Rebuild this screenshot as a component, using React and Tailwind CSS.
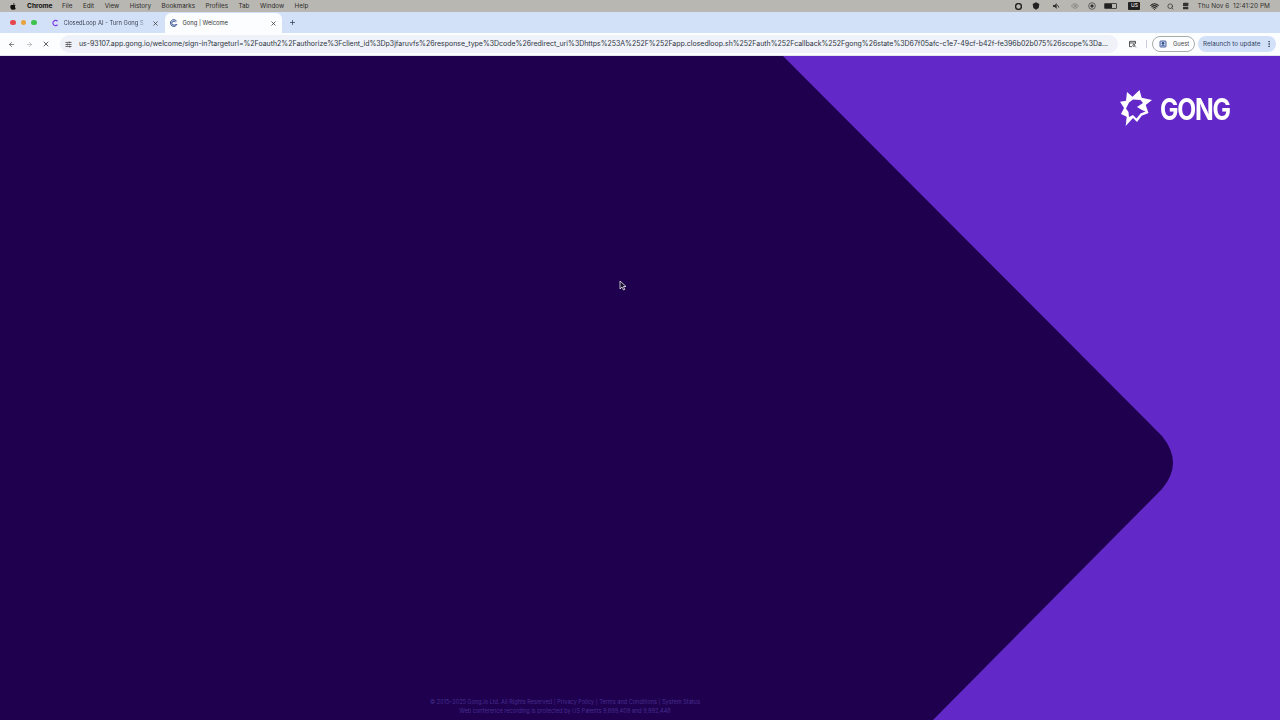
import React from "react";
import { X, Plus, ArrowLeft, ArrowRight, SlidersHorizontal, EllipsisVertical, Wifi, Search, Circle, Eye } from "lucide-react";

const menus = ["File", "Edit", "View", "History", "Bookmarks", "Profiles", "Tab", "Window", "Help"];

const longUrl = "us-93107.app.gong.io/welcome/sign-in?targeturl=%2Foauth2%2Fauthorize%3Fclient_id%3Dp3jfaruvfs%26response_type%3Dcode%26redirect_uri%3Dhttps%253A%252F%252Fapp.closedloop.sh%252Fauth%252Fcallback%252Fgong%26state%3D67f05afc-c1e7-49cf-b42f-fe396b02b075%26scope%3Da...";

function AppleLogo() {
  return (
    <svg width="8" height="9" viewBox="0 0 24 24" fill="#111">
      <path d="M17.6 12.7c0-2.6 2.1-3.8 2.2-3.9-1.2-1.8-3.1-2-3.7-2-1.6-.2-3.1.9-3.9.9s-2-.9-3.3-.9C7.2 6.9 5.6 7.8 4.8 9.3c-1.8 3.1-.5 7.6 1.3 10.1.9 1.2 1.9 2.6 3.2 2.5 1.3 0 1.8-.8 3.3-.8s2 .8 3.3.8c1.400 0 2.300-1.200 3.100-2.500 1-1.400 1.400-2.800 1.400-2.900-.1 0-2.800-1-2.800-3.800zM15.100 5c.7-.9 1.200-2 1-3.200-1 0-2.200.7-2.900 1.500-.6.700-1.200 1.900-1 3 1.100.1 2.200-.5 2.900-1.300z" />
    </svg>
  );
}

function MenuBar() {
  return (
    <div className="flex h-[12px] items-center bg-[#b9b7b1] pl-[9px] pr-[10px] text-[6.3px] text-[#2a2a2a]">
      <AppleLogo />
      <span className="ml-[10px] w-[25px] pt-[1px] text-[6.6px] font-bold text-[#111]">Chrome</span>
      <div className="ml-[10px] flex gap-[10.5px] pt-[1px]">
        {menus.map((name) => (
          <span key={name}>{name}</span>
        ))}
      </div>
      <div className="ml-auto flex items-center text-[#222]">
        <Circle size={7} strokeWidth={5} className="mr-[10px]" />
        <svg width="8" height="8" viewBox="0 0 24 24" fill="#222" className="mr-[11px]"><path d="M12 1l10 5-2 12-8 5-8-5L2 6z" /></svg>
        <svg width="10" height="8" viewBox="0 0 24 24" fill="#333" className="mr-[10px]"><path d="M3 9h5l6-6v18l-6-6H3zM17 8l5 8-2 1-5-8z" /></svg>
        <Eye size={8} strokeWidth={1.5} className="mr-[9px] text-[#666]" />
        <svg width="8" height="8" viewBox="0 0 24 24" fill="none" stroke="#333" strokeWidth="2" className="mr-[8px]"><circle cx="12" cy="12" r="10" /><circle cx="12" cy="12" r="4" fill="#333" /></svg>
        <div className="mr-[11px] h-[6px] w-[13px] rounded-[1px] border border-[#444] bg-[linear-gradient(90deg,#222_60%,transparent_60%)]" />
        <div className="mr-[10px] flex h-[8px] w-[12px] items-center justify-center rounded-[1px] bg-[#222] text-[5px] text-white">US</div>
        <Wifi size={9} strokeWidth={3} className="mr-[8px]" />
        <Search size={7} strokeWidth={2.5} className="mr-[7px] text-[#333]" />
        <svg width="10" height="8" viewBox="0 0 24 24" fill="#333" className="mr-[6px]"><rect x="3" y="2" width="16" height="11" rx="2" /><rect x="3" y="15" width="16" height="7" rx="1" /></svg>
        <span className="whitespace-nowrap pt-[1px] text-[6.5px] text-[#333]">Thu Nov 6&nbsp; 12:41:20 PM</span>
      </div>
    </div>
  );
}

function TabStrip() {
  return (
    <div className="flex h-[21px] items-end bg-[#d3e1f8] pl-[10px] text-[5.8px] text-[#3b4252]">
      <div className="mb-[8px] flex gap-[5px]">
        <span className="h-[5.5px] w-[5.5px] rounded-full bg-[#e5484d]" />
        <span className="h-[5.5px] w-[5.5px] rounded-full bg-[#e8a33d]" />
        <span className="h-[5.5px] w-[5.5px] rounded-full bg-[#3fc24f]" />
      </div>
      <div className="ml-[13px] flex h-[20px] w-[112px] items-center">
        <svg width="7" height="8" viewBox="0 0 24 24" fill="none" stroke="#7c3aed" strokeWidth="4" className="ml-[2px]"><path d="M19 6a9 9 0 1 0 0 12" /></svg>
        <span className="ml-[5px] w-[82px] overflow-hidden whitespace-nowrap [mask-image:linear-gradient(90deg,#000_90%,transparent)]">ClosedLoop AI - Turn Gong S</span>
        <X size={7} strokeWidth={2.5} className="ml-[6px] text-[#333]" />
      </div>
      <div className="ml-[3px] flex h-[20px] w-[117px] items-center rounded-t-[6px] bg-[#fcfdff] pl-[5px] text-[#333]">
        <svg width="8" height="8" viewBox="0 0 24 24" fill="none" stroke="#2f4a8a" strokeWidth="3"><path d="M20 7a10 10 0 1 0 1 8" /><path d="M17 10a6 6 0 1 0 0 5" /></svg>
        <span className="ml-[5px] whitespace-nowrap">Gong | Welcome</span>
        <X size={7} strokeWidth={2.5} className="ml-auto mr-[5px]" />
      </div>
      <Plus size={7} strokeWidth={2.5} className="mb-[7px] ml-[7px] text-[#2f3a55]" />
    </div>
  );
}

function Toolbar() {
  return (
    <div className="flex h-[23px] items-center border-b border-[#e2e4ee] bg-[#fcfdff] pl-[8px] pr-[4px]">
      <ArrowLeft size={7} strokeWidth={2.5} className="text-[#555]" />
      <ArrowRight size={7} strokeWidth={2.5} className="ml-[11px] text-[#aaa]" />
      <X size={8} strokeWidth={2.5} className="ml-[9px] text-[#444]" />
      <div className="ml-[10px] flex h-[18px] w-[1058px] items-center rounded-full bg-[#eff2f9] pl-[5px] pr-[10px]">
        <SlidersHorizontal size={7} strokeWidth={2.5} className="shrink-0 text-[#333]" />
        <span className="ml-[7px] whitespace-nowrap text-[6.97px] text-[#2e3340]">{longUrl}</span>
      </div>
      <svg width="9" height="8" viewBox="0 0 24 24" fill="none" stroke="#333" strokeWidth="2.5" className="ml-[10px] shrink-0"><path d="M11 20H3V4h18v7" /><path d="M3 9h18" /><circle cx="16" cy="16" r="3" /><path d="M19 19l3 3" /></svg>
      <span className="ml-[9px] h-[8px] w-px bg-[#ccd]" />
      <div className="ml-[5px] flex h-[16px] w-[43px] shrink-0 items-center rounded-full border border-[#a9aca6] pl-[6px] text-[5.8px] text-[#444]">
        <svg width="8" height="8" viewBox="0 0 24 24" fill="#c6d5f3" stroke="#2f4a8a" strokeWidth="2.5"><rect x="3" y="3" width="18" height="18" rx="2" /><circle cx="12" cy="10" r="3" fill="#2f4a8a" /><path d="M7 18c1-3 9-3 10 0" /></svg>
        <span className="ml-[6px]">Guest</span>
      </div>
      <div className="ml-[3px] flex h-[16px] w-[78px] shrink-0 items-center rounded-full bg-[#d3e1f8] pl-[5px] text-[6.3px] text-[#2f3f5f]">
        <span className="whitespace-nowrap pt-[1px]">Relaunch to update</span>
        <EllipsisVertical size={8} strokeWidth={2.5} className="ml-auto mr-[3px]" />
      </div>
    </div>
  );
}

function GongLogo() {
  return (
    <div className="flex w-[110px] items-center text-white">
      <svg width="35" height="37" viewBox="0 0 35 37" fill="white" className="shrink-0">
        <path fillRule="evenodd" d="M7 2L12.500 6.700 19.500 0 21.700 7.700 32 10 25.700 15 28.500 23 21.700 25.700 17 32 13 28 5.700 36 6.700 26.700 1 24 4 18 0 11.700 6 10.700zM9 12.500L13 9.500 20.500 10 23 13 17 17 22 20 25.500 21.500 20.500 23.500 16.500 28.500 13 25 9 27 8.500 22 6 18.500z" />
      </svg>
      <span className="ml-[5px] w-[70px] origin-left scale-x-[0.82] font-['Inter',sans-serif] text-[30px] font-bold leading-none tracking-[-1.5px]">GONG</span>
    </div>
  );
}

export default function App() {
  return (
    <div className="flex h-[720px] w-[1280px] flex-col overflow-hidden font-['Inter','Liberation_Sans',sans-serif]">
      <MenuBar />
      <TabStrip />
      <Toolbar />
      <main className="relative flex flex-1 flex-col bg-[#6329c8]">
        {/* dark panel with the rounded point on the right */}
        <svg className="absolute inset-0" width="1280" height="664" viewBox="0 0 1280 664">
          <path d="M0 0H783L1162 380Q1184 407 1162 433L933 664H0Z" fill="#1f004e" />
        </svg>
        <div className="relative flex justify-end pr-[50px] pt-[34px]">
          <GongLogo />
        </div>
        <div className="relative mt-auto pb-[4.5px] pr-[150px] text-center text-[5.6px] leading-[9px] text-[#452f90]">
          <p>© 2015–2025 Gong.io Ltd. All Rights Reserved | Privacy Policy | Terms and Conditions | System Status</p>
          <p>Web conference recording is protected by US Patents 9,699,409 and 9,992,448</p>
        </div>
        {/* mouse cursor */}
        <svg className="absolute left-[619px] top-[224px]" width="8" height="11" viewBox="0 0 8 11">
          <path d="M1 1v8l2-2 1.500 3 1.300-.6L4.400 6.500H7z" fill="#1a1030" stroke="#e8e8e8" strokeWidth="0.800" />
        </svg>
      </main>
    </div>
  );
}
